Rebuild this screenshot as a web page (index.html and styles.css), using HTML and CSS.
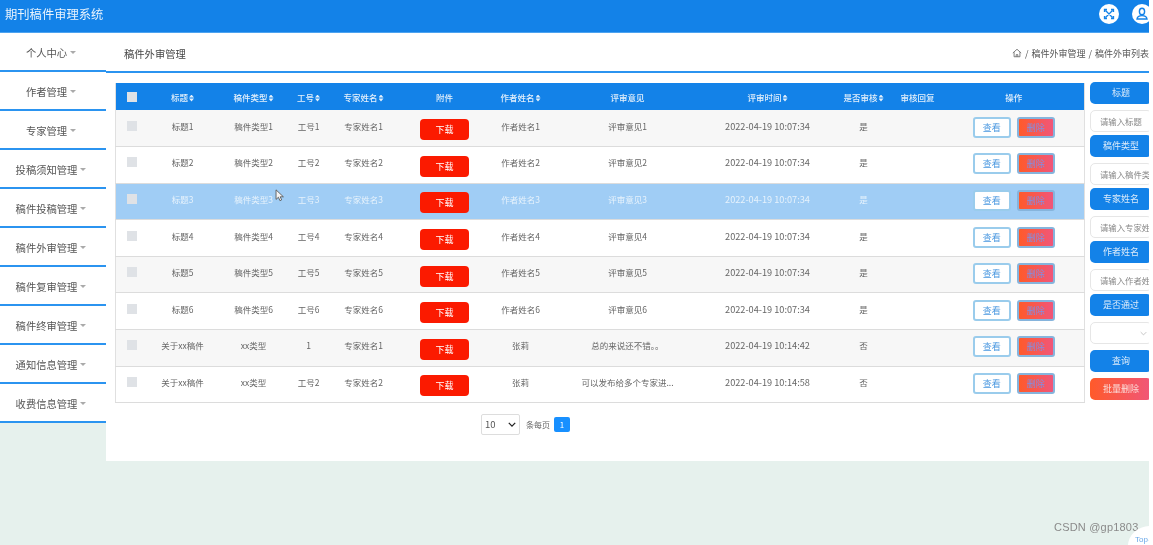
FILE: index.html
```html
<!DOCTYPE html>
<html lang="zh-CN">
<head>
<meta charset="utf-8">
<title>期刊稿件审理系统</title>
<link rel="stylesheet" href="styles.css">
</head>
<body>
<div class="page">
  <header class="topbar">
    <div class="brand">期刊稿件审理系统</div>
    <div class="top-icons">
      <span class="round-icon"><svg viewBox="0 0 20 20" width="20" height="20"><path d="M6.500 6.500l7 7M13.500 6.500l-7 7M5.500 8V5.500H8M14.500 8V5.500H12M5.500 12v2.500H8M14.500 12v2.500H12" fill="none" stroke="#1382e8" stroke-width="1.300"/></svg></span>
      <span class="round-icon"><svg viewBox="0 0 20 20" width="20" height="20"><ellipse cx="10" cy="7.500" rx="2.600" ry="3.200" fill="none" stroke="#1382e8" stroke-width="1.400"/><path d="M5 15c.3-2.300 2.300-3.400 5-3.400s4.700 1.100 5 3.400z" fill="none" stroke="#1382e8" stroke-width="1.400"/></svg></span>
    </div>
  </header>
  <div class="layout">
    <nav class="sidebar">
      <div class="nav-item">个人中心<i class="caret"></i></div>
      <div class="nav-item">作者管理<i class="caret"></i></div>
      <div class="nav-item">专家管理<i class="caret"></i></div>
      <div class="nav-item">投稿须知管理<i class="caret"></i></div>
      <div class="nav-item">稿件投稿管理<i class="caret"></i></div>
      <div class="nav-item">稿件外审管理<i class="caret"></i></div>
      <div class="nav-item">稿件复审管理<i class="caret"></i></div>
      <div class="nav-item">稿件终审管理<i class="caret"></i></div>
      <div class="nav-item">通知信息管理<i class="caret"></i></div>
      <div class="nav-item">收费信息管理<i class="caret"></i></div>
    </nav>
    <main class="content">
      <div class="crumbbar">
        <div class="page-title">稿件外审管理</div>
        <div class="crumbs">
          <svg viewBox="0 0 12 12" width="10" height="10"><path d="M1 6l5-4.500L11 6M2.500 5v5.500h7V5M5 10.500V8h2v2.500" fill="none" stroke="#666" stroke-width="1"/></svg>
          <span>/ 稿件外审管理 / 稿件外审列表</span>
        </div>
      </div>
      <div class="work">
        <div class="table-area">
          <table class="grid">
            <colgroup>
              <col class="c-check"><col class="c-title"><col class="c-type"><col class="c-no"><col class="c-expert"><col class="c-file"><col class="c-author"><col class="c-opinion"><col class="c-time"><col class="c-pass"><col class="c-reply"><col class="c-ops">
            </colgroup>
            <thead>
              <tr>
                <th><span class="check"></span></th>
                <th>标题<i class="sort"></i></th>
                <th>稿件类型<i class="sort"></i></th>
                <th>工号<i class="sort"></i></th>
                <th>专家姓名<i class="sort"></i></th>
                <th>附件</th>
                <th>作者姓名<i class="sort"></i></th>
                <th>评审意见</th>
                <th>评审时间<i class="sort"></i></th>
                <th>是否审核<i class="sort"></i></th>
                <th>审核回复</th>
                <th class="ops">操作</th>
              </tr>
            </thead>
            <tbody>
              <tr>
                <td><span class="check"></span></td><td>标题1</td><td>稿件类型1</td><td>工号1</td><td>专家姓名1</td>
                <td><span class="dl">下载</span></td><td>作者姓名1</td><td>评审意见1</td><td class="time">2022-04-19 10:07:34</td><td>是</td><td></td>
                <td class="ops"><span class="btn-view">查看</span><span class="btn-del">删除</span></td>
              </tr>
              <tr>
                <td><span class="check"></span></td><td>标题2</td><td>稿件类型2</td><td>工号2</td><td>专家姓名2</td>
                <td><span class="dl">下载</span></td><td>作者姓名2</td><td>评审意见2</td><td class="time">2022-04-19 10:07:34</td><td>是</td><td></td>
                <td class="ops"><span class="btn-view">查看</span><span class="btn-del">删除</span></td>
              </tr>
              <tr class="hover">
                <td><span class="check"></span></td><td>标题3</td><td>稿件类型3</td><td>工号3</td><td>专家姓名3</td>
                <td><span class="dl">下载</span></td><td>作者姓名3</td><td>评审意见3</td><td class="time">2022-04-19 10:07:34</td><td>是</td><td></td>
                <td class="ops"><span class="btn-view">查看</span><span class="btn-del">删除</span></td>
              </tr>
              <tr>
                <td><span class="check"></span></td><td>标题4</td><td>稿件类型4</td><td>工号4</td><td>专家姓名4</td>
                <td><span class="dl">下载</span></td><td>作者姓名4</td><td>评审意见4</td><td class="time">2022-04-19 10:07:34</td><td>是</td><td></td>
                <td class="ops"><span class="btn-view">查看</span><span class="btn-del">删除</span></td>
              </tr>
              <tr>
                <td><span class="check"></span></td><td>标题5</td><td>稿件类型5</td><td>工号5</td><td>专家姓名5</td>
                <td><span class="dl">下载</span></td><td>作者姓名5</td><td>评审意见5</td><td class="time">2022-04-19 10:07:34</td><td>是</td><td></td>
                <td class="ops"><span class="btn-view">查看</span><span class="btn-del">删除</span></td>
              </tr>
              <tr>
                <td><span class="check"></span></td><td>标题6</td><td>稿件类型6</td><td>工号6</td><td>专家姓名6</td>
                <td><span class="dl">下载</span></td><td>作者姓名6</td><td>评审意见6</td><td class="time">2022-04-19 10:07:34</td><td>是</td><td></td>
                <td class="ops"><span class="btn-view">查看</span><span class="btn-del">删除</span></td>
              </tr>
              <tr>
                <td><span class="check"></span></td><td>关于xx稿件</td><td>xx类型</td><td>1</td><td>专家姓名1</td>
                <td><span class="dl">下载</span></td><td>张莉</td><td>总的来说还不错。。</td><td class="time">2022-04-19 10:14:42</td><td>否</td><td></td>
                <td class="ops"><span class="btn-view">查看</span><span class="btn-del">删除</span></td>
              </tr>
              <tr>
                <td><span class="check"></span></td><td>关于xx稿件</td><td>xx类型</td><td>工号2</td><td>专家姓名2</td>
                <td><span class="dl">下载</span></td><td>张莉</td><td>可以发布给多个专家进...</td><td class="time">2022-04-19 10:14:58</td><td>否</td><td></td>
                <td class="ops"><span class="btn-view">查看</span><span class="btn-del">删除</span></td>
              </tr>
            </tbody>
          </table>
          <div class="pager">
            <div class="page-size"><span>10</span><svg viewBox="0 0 10 6" width="8" height="5"><path d="M1 1l4 4 4-4" fill="none" stroke="#222" stroke-width="1.600"/></svg></div>
            <span class="pager-label">条每页</span>
            <span class="page-num">1</span>
          </div>
        </div>
        <aside class="filters">
          <div class="f-label">标题</div>
          <div class="f-input">请输入标题</div>
          <div class="f-label">稿件类型</div>
          <div class="f-input">请输入稿件类型</div>
          <div class="f-label">专家姓名</div>
          <div class="f-input">请输入专家姓名</div>
          <div class="f-label">作者姓名</div>
          <div class="f-input">请输入作者姓名</div>
          <div class="f-label">是否通过</div>
          <div class="f-input f-select"><svg viewBox="0 0 10 6" width="7" height="5"><path d="M1 1l4 4 4-4" fill="none" stroke="#bbb" stroke-width="1.200"/></svg></div>
          <div class="f-label f-query">查询</div>
          <div class="f-label f-batch">批量删除</div>
        </aside>
      </div>
    </main>
  </div>
  <svg class="cursor" viewBox="0 0 10 15" width="9" height="13"><path d="M1 1v11l2.800-2.500L5.500 13.500l2-1L5.800 9H9.500z" fill="#f4f4f4" stroke="#555" stroke-width="1"/></svg>
  <div class="watermark">CSDN @gp1803</div>
  <div class="to-top">Top<span class="top-arrow">✦</span></div>
</div>
</body>
</html>
```

FILE: styles.css
```css
* { box-sizing: border-box; }
html, body { margin: 0; height: 100%; background: #fff; overflow: hidden; }
body { font-family: "Noto Sans CJK SC", "Noto Sans", sans-serif; color: #666; }

.page {
  position: relative;
  width: 1149px;
  height: 545px;
  background: #e6f1ed;
  overflow: hidden;
  filter: blur(0.55px);
}

.topbar {
  height: 33px;
  background: #1382e8;
  border-bottom: 1px solid #4da3f0;
  display: flex;
  align-items: center;
  justify-content: space-between;
  padding: 0 0 5px 5px;
}
.brand { color: #e8f3fd; font-size: 12.300px; }
.top-icons { display: flex; gap: 13px; margin-right: -3px; }
.round-icon {
  width: 20px;
  height: 20px;
  border-radius: 50%;
  background: #fff;
  display: block;
}
.round-icon svg { display: block; }

.layout { display: flex; align-items: flex-start; }

.sidebar { width: 106px; flex: none; background: #fff; }
.nav-item {
  height: 39px;
  border-bottom: 2px solid #2b94f0;
  display: flex;
  align-items: center;
  justify-content: center;
  padding: 2px 4px 0 0;
  font-size: 10.300px;
  color: #555;
}
.caret {
  width: 0;
  height: 0;
  margin-left: 3px;
  margin-bottom: 1px;
  border: 3px solid transparent;
  border-top-color: #aaa;
  border-bottom-width: 0;
}

.content { flex: 1; height: 428px; background: #fff; }
.crumbbar {
  height: 40px;
  display: flex;
  align-items: center;
  justify-content: space-between;
  padding: 2px 3px 0 18px;
  border-bottom: 2px solid #2b94f0;
}
.page-title { font-size: 10.300px; color: #444; }
.crumbs { display: flex; align-items: center; gap: 3px; font-size: 9px; color: #555; word-spacing: 1px; }
.crumbs svg { display: block; }

.work { display: flex; padding: 10px 0 0 9px; gap: 6px; }
.table-area { width: 969px; flex: none; }

.grid {
  width: 969px;
  table-layout: fixed;
  border-collapse: collapse;
  font-size: 8.500px;
  text-align: center;
  border-left: 1px solid #e0e0e0;
  border-right: 1px solid #e0e0e0;
}
.c-check { width: 32px; }
.c-title { width: 70px; }
.c-type { width: 72px; }
.c-no { width: 38px; }
.c-expert { width: 72px; }
.c-file { width: 90px; }
.c-author { width: 62px; }
.c-opinion { width: 152px; }
.c-time { width: 128px; }
.c-pass { width: 64px; }
.c-reply { width: 44px; }
.c-ops { width: 145px; }

.grid thead tr { height: 27px; background: #1382e8; color: #e4f0fb; }
.grid th { font-weight: 500; padding: 0; }
.grid tbody tr { height: 36.600px; border-bottom: 1px solid #dcdcdc; color: #666; }
.grid tbody tr:nth-child(odd) { background: #f7f7f7; }
.grid tbody tr:nth-child(even) { background: #fff; }
.grid tbody tr.hover { background: #a0cdf5; color: #e6f2fc; }
.grid td { padding: 0 0 5px; white-space: nowrap; overflow: hidden; }
.grid .ops { padding-left: 4px; }
.grid .time { font-size: 9.200px; }

.check {
  display: block;
  width: 10px;
  height: 10px;
  margin: 0 auto;
  background: #dfe2e6;
}
.sort {
  display: inline-block;
  width: 5px;
  height: 7px;
  margin-left: 1px;
  vertical-align: -1px;
  background: #e4f0fb;
  clip-path: polygon(50% 0, 100% 43%, 0 43%, 50% 0, 50% 100%, 0 57%, 100% 57%, 50% 100%);
}
.dl {
  display: block;
  width: 49px;
  height: 21px;
  line-height: 21px;
  margin: 8px auto 0;
  background: #fb1a00;
  border-radius: 4px;
  color: #fff;
  font-size: 9px;
}
.btn-view, .btn-del {
  display: inline-block;
  width: 38px;
  height: 21px;
  line-height: 17px;
  margin-top: 3px;
  border: 2px solid #9accec;
  border-radius: 3px;
  vertical-align: middle;
  font-size: 9px;
  color: #4a98e0;
}
.btn-view { background: #fff; margin-right: 6px; }
.btn-del {
  background: linear-gradient(90deg, #ff5a2a, #f0567a);
  border-color: #86b4dc;
  color: #7f8fe6;
}

.pager {
  display: flex;
  align-items: center;
  margin-top: 11px;
  padding-left: 366px;
  font-size: 8px;
}
.page-size {
  width: 39px;
  height: 21px;
  border: 1px solid #ddd;
  border-radius: 2px;
  padding: 0 3px;
  display: flex;
  align-items: center;
  justify-content: space-between;
  color: #555;
  font-size: 9.500px;
  line-height: 1;
}
.pager-label { margin: 0 4px 0 6px; color: #666; }
.page-num {
  width: 16px;
  height: 15px;
  line-height: 15px;
  text-align: center;
  color: #fff;
  background: #1890ff;
  border-radius: 2px;
}

.filters { width: 62px; flex: none; margin-top: -1px; }
.f-label {
  height: 22px;
  line-height: 22px;
  border-radius: 5px;
  background: #1382e8;
  color: #dcebfa;
  text-align: center;
  font-size: 9px;
}
.f-input {
  height: 22px;
  margin: 6px 0 3px;
  padding: 0 0 0 9px;
  line-height: 21px;
  border: 1px solid #e6e6e6;
  border-radius: 5px;
  background: #fff;
  color: #888;
  font-size: 8.400px;
  white-space: nowrap;
  overflow: hidden;
}
.f-select {
  margin-bottom: 6px;
  display: flex;
  align-items: center;
  justify-content: flex-end;
  padding-right: 4px;
}
.f-query { margin-bottom: 6px; }
.f-batch { background: linear-gradient(90deg, #ff5a2a, #f0567a); color: #fbdcd8; }

.cursor { position: absolute; left: 275px; top: 189px; }
.watermark {
  position: absolute;
  left: 1054px;
  top: 521px;
  font-family: "Liberation Sans", sans-serif;
  font-size: 11px;
  color: #8a8a8a;
  letter-spacing: 0.2px;
}
.to-top {
  position: absolute;
  left: 1128px;
  top: 526px;
  width: 45px;
  height: 40px;
  padding: 9px 0 0 7px;
  border-radius: 50% 0 0 0;
  background: #fff;
  color: #6aa8e8;
  font-family: "Liberation Sans", sans-serif;
  font-size: 8px;
}
.top-arrow { font-size: 5px; color: #888; }
```
